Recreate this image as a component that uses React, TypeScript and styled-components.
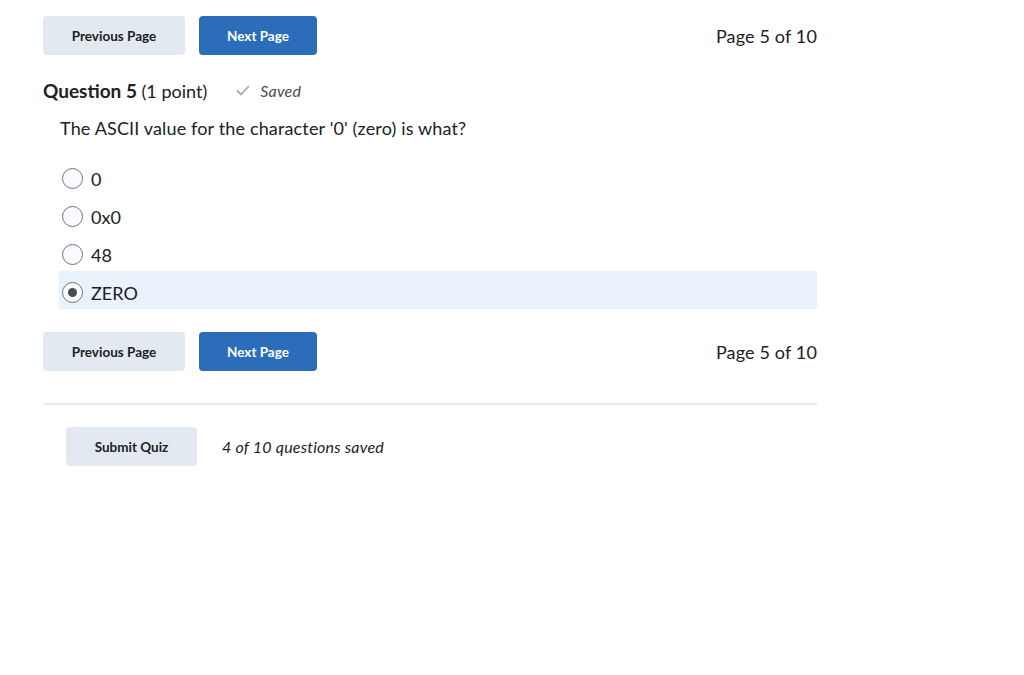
import React from 'react';
import styled, { createGlobalStyle } from 'styled-components';

const GlobalStyle = createGlobalStyle`
    body {
        margin: 0;
        background: #ffffff;
        font-family: Lato, "Open Sans", sans-serif;
        color: #202122;
    }
`

const Page = styled.div`
    width: 774px;
    padding: 16px 0 0 43px;
    display: flex;
    flex-direction: column;
`

const NavRow = styled.div`
    display: flex;
    align-items: center;
    height: 39px;
`

const Button = styled.button<{ primary?: boolean; width: number }>`
    width: ${p => p.width}px;
    height: 39px;
    border: none;
    border-radius: 4px;
    background: ${p => (p.primary ? '#2b6db8' : '#e3e9f1')};
    color: ${p => (p.primary ? '#ffffff' : '#202122')};
    font-family: Lato, sans-serif;
    font-size: 13.5px;
    font-weight: 700;
    margin-right: 14px;
    cursor: pointer;
`

const PageCount = styled.div`
    margin-left: auto;
    font-size: 18px;
    letter-spacing: 0.15px;
    color: #202122;
`

const QuestionHeader = styled.div`
    display: flex;
    align-items: center;
    margin-top: 23px;
    height: 24px;
`

const QuestionTitle = styled.h2`
    margin: 0;
    font-size: 19px;
    font-weight: 700;
    color: #202122;
    span {
        font-weight: 400;
        font-size: 18px;
    }
`

const SavedTag = styled.div`
    display: flex;
    align-items: center;
    margin-left: 29px;
    font-size: 16px;
    letter-spacing: 0.2px;
    font-style: italic;
    color: #494c4e;
    svg {
        margin-right: 10px;
    }
`

const QuestionText = styled.p`
    margin: 14px 0 0 17px;
    font-size: 18px;
    letter-spacing: 0.15px;
    line-height: 24px;
`

const Options = styled.div`
    display: flex;
    flex-direction: column;
    margin: 17px 0 23px 16px;
`

const Option = styled.label<{ selected?: boolean }>`
    box-sizing: border-box;
    display: flex;
    align-items: center;
    height: 38px;
    padding: 5px 0 0 3px;
    background: ${p => (p.selected ? '#eaf2fb' : 'transparent')};
    font-size: 18px;
    cursor: pointer;
`

const Radio = styled.span<{ checked?: boolean }>`
    box-sizing: border-box;
    width: 21px;
    height: 21px;
    border: 1px solid #6e7376;
    border-radius: 50%;
    background: #f9fbff;
    margin-right: 8px;
    display: flex;
    align-items: center;
    justify-content: center;
    &::after {
        content: '';
        display: ${p => (p.checked ? 'block' : 'none')};
        width: 9px;
        height: 9px;
        border-radius: 50%;
        background: #494c4e;
    }
`

const Divider = styled.hr`
    border: none;
    border-top: 2px solid #e3e9f1;
    margin: 32px 0 0 0;
`

const SubmitRow = styled.div`
    display: flex;
    align-items: center;
    margin: 22px 0 0 23px;
`

const SavedCount = styled.div`
    font-size: 16px;
    letter-spacing: 0.2px;
    font-style: italic;
    color: #202122;
    margin-left: 11px;
`

const options = ['0', '0x0', '48', 'ZERO']
const selected = 'ZERO'

const Nav = () => (
    <NavRow>
        <Button width={142}>Previous Page</Button>
        <Button width={118} primary>Next Page</Button>
        <PageCount>Page 5 of 10</PageCount>
    </NavRow>
)

export default function App() {
    return (
        <>
            <GlobalStyle />
            <Page>
                <Nav />
                <QuestionHeader>
                    <QuestionTitle>Question 5 <span>(1 point)</span></QuestionTitle>
                    <SavedTag>
                        <svg width="14" height="11" viewBox="0 0 14 11">
                            <path d="M1 5.5 L5 9.5 L13 1" fill="none" stroke="#a8adb1" strokeWidth="1.8" />
                        </svg>
                        Saved
                    </SavedTag>
                </QuestionHeader>
                <QuestionText>The ASCII value for the character '0' (zero) is what?</QuestionText>
                <Options>
                    {options.map(o => (
                        <Option key={o} selected={o === selected}>
                            <Radio checked={o === selected} />
                            {o}
                        </Option>
                    ))}
                </Options>
                <Nav />
                <Divider />
                <SubmitRow>
                    <Button width={131}>Submit Quiz</Button>
                    <SavedCount>4 of 10 questions saved</SavedCount>
                </SubmitRow>
            </Page>
        </>
    )
}
